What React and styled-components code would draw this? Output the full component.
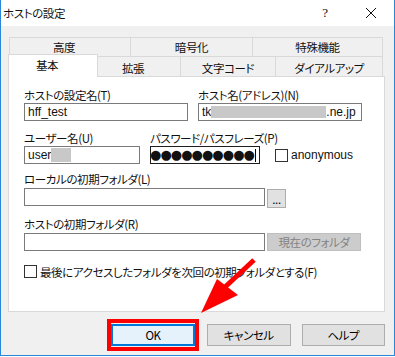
import React from 'react';
import styled, { createGlobalStyle } from 'styled-components';

const GlobalStyle = createGlobalStyle`
    html, body {
        margin: 0;
        padding: 0;
        background: #ffffff;
    }
    * {
        box-sizing: border-box;
    }
`;

const font = `"Noto Sans CJK JP", "Noto Sans", sans-serif`;

const topTabs = [
    { label: '高度', width: 122, shift: 6 },
    { label: '暗号化', width: 123 },
    { label: '特殊機能', width: 131 },
];

const bottomTabs = [
    { label: '拡張', width: 84, shift: 6 },
    { label: '文字コード', width: 96 },
    { label: 'ダイアルアップ', width: 108 },
];

const App = () => (
    <>
        <GlobalStyle />
        <Window>
            <TitleBar>
                <Title>ホストの設定</Title>
                <TitleButton>?</TitleButton>
                <CloseButton>
                    <svg width="12" height="12" viewBox="0 0 12 12">
                        <path d="M1 1 L11 11 M11 1 L1 11" stroke="#111" strokeWidth="1" />
                    </svg>
                </CloseButton>
            </TitleBar>

            <Body>
                <TabRow>
                    {topTabs.map((tab) => (
                        <Tab key={tab.label} $width={tab.width} $shift={tab.shift} $top>
                            {tab.label}
                        </Tab>
                    ))}
                </TabRow>
                <TabRow $bottom>
                    <ActiveTab>基本</ActiveTab>
                    {bottomTabs.map((tab) => (
                        <Tab key={tab.label} $width={tab.width} $shift={tab.shift}>
                            {tab.label}
                        </Tab>
                    ))}
                </TabRow>

                <Panel>
                    <Row>
                        <Field $width={164}>
                            <Label>ホストの設定名(T)</Label>
                            <Input>hff_test</Input>
                        </Field>
                        <Field $width={164}>
                            <Label>ホスト名(アドレス)(N)</Label>
                            <Input>
                                tk<Redacted $width={115} />.ne.jp
                            </Input>
                        </Field>
                    </Row>

                    <Row $gap={10}>
                        <Field $width={116}>
                            <Label>ユーザー名(U)</Label>
                            <Input>
                                user<Redacted $width={20} $height={14} />
                            </Input>
                        </Field>
                        <Field $width={110}>
                            <Label>パスワード/パスフレーズ(P)</Label>
                            <Input $focused>
                                <Dots>
                                    {Array.from({ length: 10 }).map((_, i) => (
                                        <Dot key={i}>●</Dot>
                                    ))}
                                </Dots>
                                <Caret />
                            </Input>
                        </Field>
                        <Check>
                            <Box />
                            <CheckText $latin>anonymous</CheckText>
                        </Check>
                    </Row>

                    <Block $gap={8}>
                        <Label>ローカルの初期フォルダ(L)</Label>
                        <InputLine>
                            <Input $wide />
                            <Button $width={19} $small>...</Button>
                        </InputLine>
                    </Block>

                    <Block $gap={9}>
                        <Label>ホストの初期フォルダ(R)</Label>
                        <InputLine>
                            <Input $wide />
                            <Button $width={94} disabled>現在のフォルダ</Button>
                        </InputLine>
                    </Block>

                    <Check $row>
                        <Box />
                        <CheckText>最後にアクセスしたフォルダを次回の初期フォルダとする(F)</CheckText>
                    </Check>
                </Panel>

                <ButtonRow>
                    <Highlight>
                        <DialogButton $default>OK</DialogButton>
                    </Highlight>
                    <DialogButton $ml={8}>キャンセル</DialogButton>
                    <DialogButton $ml={11}>ヘルプ</DialogButton>
                </ButtonRow>
            </Body>

            <Arrow viewBox="0 0 395 357" width="395" height="357">
                <line x1="254" y1="260" x2="224" y2="288" stroke="#ff0000" strokeWidth="5" />
                <polygon points="201,313 217,279 238,295" fill="#ff0000" />
            </Arrow>
        </Window>
    </>
);

export default App;

const Window = styled.div`
    position: relative;
    display: flex;
    flex-direction: column;
    width: 395px;
    height: 356px;
    border-left: 1px solid #2a86d9;
    border-right: 1px solid #2a86d9;
    border-bottom: 1px solid #2a86d9;
    font-family: ${font};
    font-size: 11.5px;
    letter-spacing: -0.4px;
    font-feature-settings: "palt";
    color: #111;
    overflow: hidden;
`;

const TitleBar = styled.div`
    display: flex;
    align-items: center;
    height: 26px;
    padding-left: 2px;
    background: #ffffff;
`;

const Title = styled.div`
    flex: 1;
    line-height: 14px;
`;

const TitleButton = styled.div`
    width: 12px;
    margin-right: 34px;
    text-align: center;
    font-family: "Liberation Serif", serif;
    font-size: 13px;
`;

const CloseButton = styled.div`
    display: flex;
    width: 12px;
    margin-right: 17px;
`;

const Body = styled.div`
    flex: 1;
    padding: 11px 9px 0 7px;
    background: #f0f0f0;
`;

const TabRow = styled.div`
    display: flex;
    align-items: flex-end;
    height: ${({ $bottom }) => ($bottom ? 20 : 19)}px;
    padding-left: ${({ $bottom }) => ($bottom ? 0 : 1)}px;
`;

const Tab = styled.div`
    display: flex;
    align-items: center;
    justify-content: center;
    width: ${({ $width }) => $width}px;
    height: ${({ $top }) => ($top ? 19 : 20)}px;
    padding-right: ${({ $shift }) => ($shift || 0) * 2}px;
    padding-top: ${({ $top }) => ($top ? 0 : 2)}px;
    border: 1px solid #d9d9d9;
    border-bottom: none;
    background: #f0f0f0;
    line-height: 14px;

    & + & {
        margin-left: -1px;
    }
`;

const ActiveTab = styled.div`
    position: relative;
    z-index: 1;
    display: flex;
    align-items: center;
    justify-content: center;
    width: 90px;
    height: 23px;
    margin-bottom: -1px;
    margin-right: -1px;
    padding-right: 12px;
    padding-bottom: 3px;
    border: 1px solid #d9d9d9;
    border-bottom: none;
    background: #ffffff;
    line-height: 14px;
`;

const Panel = styled.div`
    display: flex;
    flex-direction: column;
    width: 377px;
    height: 236px;
    padding: 11px 0 0 15px;
    border: 1px solid #d9d9d9;
    background: #ffffff;
`;

const Row = styled.div`
    display: flex;
    align-items: flex-end;
    gap: 10px;
    margin-top: ${({ $gap }) => $gap || 0}px;
`;

const Field = styled.div`
    display: flex;
    flex-direction: column;
    width: ${({ $width }) => $width}px;
`;

const Label = styled.div`
    height: 15px;
    line-height: 15px;
    white-space: nowrap;
`;

const Input = styled.div`
    display: flex;
    align-items: center;
    width: ${({ $wide }) => ($wide ? '241px' : '100%')};
    height: 18px;
    padding-left: 3px;
    border: 1px solid ${({ $focused }) => ($focused ? '#1e1e1e' : '#7a7a7a')};
    background: #ffffff;
    font-family: "Liberation Sans", sans-serif;
    font-size: 12px;
    letter-spacing: 0;
    line-height: 16px;
    overflow: hidden;
    white-space: nowrap;
`;

const Redacted = styled.span`
    display: inline-block;
    width: ${({ $width }) => $width}px;
    height: ${({ $height }) => $height || 12}px;
    background: #c8c8c8;
`;

const Dots = styled.span`
    display: flex;
    margin-left: -4px;
`;

const Dot = styled.span`
    display: inline-block;
    width: 10.4px;
    text-align: center;
    font-family: "DejaVu Sans", sans-serif;
    font-size: 13px;
    line-height: 14px;
`;

const Caret = styled.span`
    width: 1px;
    height: 13px;
    margin-left: 1px;
    background: #000;
`;

const Check = styled.div`
    display: flex;
    align-items: center;
    margin-left: ${({ $row }) => ($row ? 0 : 5)}px;
    margin-top: ${({ $row }) => ($row ? 14 : 0)}px;
    height: ${({ $row }) => ($row ? 13 : 18)}px;
`;

const Box = styled.span`
    width: 13px;
    height: 13px;
    border: 1px solid #333;
    background: #fff;
`;

const CheckText = styled.span`
    margin-left: 3px;
    font-family: ${({ $latin }) => ($latin ? '"Liberation Sans", sans-serif' : font)};
    font-size: ${({ $latin }) => ($latin ? '12px' : 'inherit')};
    letter-spacing: ${({ $latin }) => ($latin ? '0' : '-0.4px')};
    line-height: 14px;
    white-space: nowrap;
`;

const Block = styled.div`
    display: flex;
    flex-direction: column;
    margin-top: ${({ $gap }) => $gap}px;
`;

const InputLine = styled.div`
    display: flex;
    align-items: flex-start;
    gap: 2px;
    margin-top: 1px;
`;

const Button = styled.button`
    display: flex;
    align-items: center;
    justify-content: center;
    width: ${({ $width }) => $width}px;
    height: ${({ $small }) => ($small ? 19 : 18)}px;
    margin-top: ${({ $small }) => ($small ? 1 : 0)}px;
    padding: 0;
    border: 1px solid ${({ disabled }) => (disabled ? '#bfbfbf' : '#adadad')};
    background: ${({ disabled }) => (disabled ? '#cccccc' : '#e1e1e1')};
    color: ${({ disabled }) => (disabled ? '#838383' : '#000')};
    font-family: ${font};
    font-size: 11.5px;
    letter-spacing: -0.4px;
    line-height: 14px;
    font-feature-settings: "palt";
`;

const ButtonRow = styled.div`
    display: flex;
    align-items: center;
    margin-top: 7px;
    padding-left: 99px;
`;

const Highlight = styled.div`
    display: flex;
    padding: 1px 0;
    border: 4px solid #ff0000;
`;

const DialogButton = styled.button`
    width: 84px;
    height: 22px;
    margin-left: ${({ $ml }) => $ml || 0}px;
    padding: 0;
    border: 1px solid ${({ $default }) => ($default ? '#0078d7' : '#adadad')};
    box-shadow: ${({ $default }) => ($default ? 'inset 0 0 0 1px #0078d7' : 'none')};
    background: ${({ $default }) => ($default ? '#e5f1fb' : '#e1e1e1')};
    color: #000;
    font-family: ${font};
    font-size: 11.5px;
    letter-spacing: -0.4px;
    line-height: 14px;
    font-feature-settings: "palt";
`;

const Arrow = styled.svg`
    position: absolute;
    top: 0;
    left: -1px;
    pointer-events: none;
`;
